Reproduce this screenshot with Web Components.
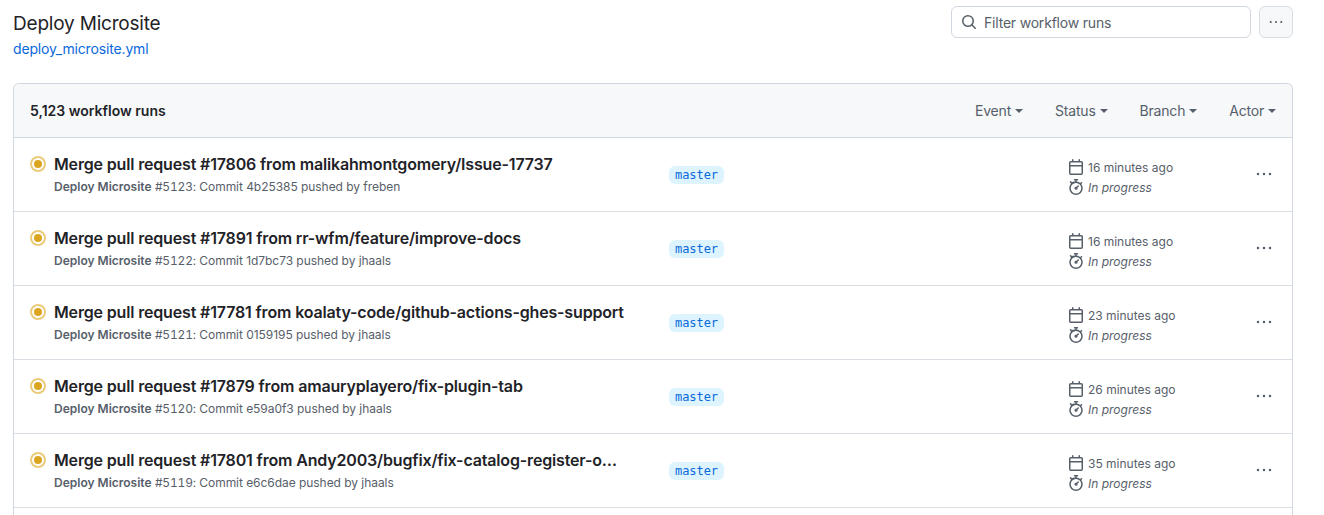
<!DOCTYPE html>
<html>
<head>
<meta charset="utf-8">
<title>Deploy Microsite</title>
<style>
    html, body { margin: 0; height: 515px; overflow: hidden; background: #fff; }
    body { font-family: Inter, "Liberation Sans", sans-serif; color: #1f2328; }
</style>
</head>
<body>
<runs-page>
    <run-row slot="rows" heading="Merge pull request #17806 from malikahmontgomery/Issue-17737" number="5123" commit="4b25385" actor="freben" age="16 minutes ago"></run-row>
    <run-row slot="rows" heading="Merge pull request #17891 from rr-wfm/feature/improve-docs" number="5122" commit="1d7bc73" actor="jhaals" age="16 minutes ago"></run-row>
    <run-row slot="rows" heading="Merge pull request #17781 from koalaty-code/github-actions-ghes-support" number="5121" commit="0159195" actor="jhaals" age="23 minutes ago"></run-row>
    <run-row slot="rows" heading="Merge pull request #17879 from amauryplayero/fix-plugin-tab" number="5120" commit="e59a0f3" actor="jhaals" age="26 minutes ago"></run-row>
    <run-row slot="rows" heading="Merge pull request #17801 from Andy2003/bugfix/fix-catalog-register-o…" number="5119" commit="e6c6dae" actor="jhaals" age="35 minutes ago"></run-row>
</runs-page>
<script>
const kebab = `<svg width="16" height="16" viewBox="0 0 16 16" fill="currentColor"><circle cx="2" cy="8" r="1.25"/><circle cx="8" cy="8" r="1.25"/><circle cx="14" cy="8" r="1.25"/></svg>`

const pageTemplate = document.createElement('template')
pageTemplate.innerHTML = `
<style>
    :host { display: block; padding: 0 31px 0 13px; }
    .top { display: flex; justify-content: space-between; height: 83px; }
    h1 { margin: 0; padding-top: 11px; font-size: 19px; line-height: 25px; font-weight: 400; letter-spacing: -0.2px; color: #1f2328; }
    a { display: block; margin-top: 3px; font-size: 14px; line-height: 20px; color: #0969da; letter-spacing: -0.15px; text-decoration: none; }
    .tools { display: flex; gap: 8px; padding: 6px 0 0; height: 32px; }
    .filter { display: flex; align-items: center; gap: 7px; box-sizing: border-box; width: 300px; height: 32px; padding: 0 9px; border: 1px solid #d0d7de; border-radius: 6px; font-size: 14px; letter-spacing: -0.2px; color: #57606a; }
    .filter svg { flex: none; }
    .more { display: flex; align-items: center; justify-content: center; box-sizing: border-box; width: 34px; height: 32px; border: 1px solid #d8dee4; border-radius: 6px; background: #f6f8fa; color: #57606a; }
    .more svg { width: 14px; height: 14px; }
    .box { border: 1px solid #d0d7de; border-bottom: 0; border-radius: 6px 6px 0 0; padding-bottom: 20px; }
    header { display: flex; align-items: center; justify-content: space-between; height: 53px; padding: 0 16px; background: #f6f8fa; border-bottom: 1px solid #d0d7de; border-radius: 6px 6px 0 0; }
    .count { font-size: 14px; font-weight: 600; line-height: 20px; color: #1f2328; }
    .filters { display: flex; gap: 32px; font-size: 14px; letter-spacing: -0.2px; color: #57606a; }
    .filters span { display: flex; align-items: center; gap: 4px; }
    .filters span::after { content: ""; border: 4px solid transparent; border-top-color: currentColor; border-bottom: 0; }
</style>
<div class="top">
    <div>
        <h1>Deploy Microsite</h1>
        <a href="#">deploy_microsite.yml</a>
    </div>
    <div class="tools">
        <div class="filter">
            <svg width="16" height="16" viewBox="0 0 16 16" fill="#57606a"><path d="M10.68 11.74a6 6 0 0 1-7.922-8.982 6 6 0 0 1 8.982 7.922l3.04 3.04a.749.749 0 0 1-.326 1.275.749.749 0 0 1-.734-.215ZM11.5 7a4.499 4.499 0 1 0-8.997 0A4.499 4.499 0 0 0 11.5 7Z"/></svg>
            Filter workflow runs
        </div>
        <div class="more">${kebab}</div>
    </div>
</div>
<div class="box">
    <header>
        <div class="count">5,123 workflow runs</div>
        <div class="filters"><span>Event</span><span>Status</span><span>Branch</span><span>Actor</span></div>
    </header>
    <slot name="rows"></slot>
</div>
`

customElements.define('runs-page',
class extends HTMLElement {
    constructor() {
        super()
        this.attachShadow({ mode: 'open' })
        .appendChild(pageTemplate.content.cloneNode(true))
    }
})

const rowTemplate = document.createElement('template')
rowTemplate.innerHTML = `
<style>
    :host { display: grid; grid-template-columns: 24px 615px 400px 1fr 16px; box-sizing: border-box; height: 74px; padding: 16px 20px 0 16px; border-bottom: 1px solid #d8dee4; }
    .status { padding-top: 2px; }
    .title { font-size: 16px; font-weight: 600; line-height: 20px; letter-spacing: -0.16px; color: #1f2328; white-space: nowrap; }
    .meta { margin-top: 4px; font-size: 12px; line-height: 18px; color: #57606a; white-space: nowrap; }
    .meta b { font-weight: 600; }
    .num { font-feature-settings: "tnum"; letter-spacing: -0.15px; }
    .rest { letter-spacing: -0.05px; }
    .branch { padding-top: 9px; }
    .branch span { display: inline-block; height: 18px; padding: 0 6px; border-radius: 6px; background: #ddf4ff; color: #0969da; font: 12px/18px "DejaVu Sans Mono", "Liberation Mono", monospace; letter-spacing: -0.05px; }
    .time { padding-top: 4px; font-size: 12px; line-height: 20px; color: #57606a; }
    .time div { display: flex; align-items: center; gap: 4px; }
    .time em { font-style: italic; }
    .time svg { flex: none; margin: -2px 0 0 -1px; }
    .menu { padding-top: 12px; color: #57606a; }
    .menu svg { display: block; width: 16px; height: 16px; }
</style>
<div class="status">
    <svg width="16" height="16" viewBox="0 0 16 16"><circle cx="8" cy="8" r="7" fill="none" stroke="#eccb7d" stroke-width="2"/><circle cx="8" cy="8" r="4" fill="#dba520"/></svg>
</div>
<div>
    <div class="title"></div>
    <div class="meta"><b>Deploy Microsite</b> <span class="num"></span> <span class="rest"></span></div>
</div>
<div class="branch"><span>master</span></div>
<div class="time">
    <div>
        <svg width="16" height="16" viewBox="0 0 16 16" fill="#57606a"><path d="M4.75 0a.75.75 0 0 1 .75.75V2h5V.75a.75.75 0 0 1 1.5 0V2h1.25c.966 0 1.75.784 1.75 1.75v10.5A1.75 1.75 0 0 1 13.25 16H2.75A1.75 1.75 0 0 1 1 14.25V3.75C1 2.784 1.784 2 2.75 2H4V.75A.75.75 0 0 1 4.75 0ZM2.5 7.5v6.75c0 .138.112.25.25.25h10.5a.25.25 0 0 0 .25-.25V7.5Zm10.75-4H2.75a.25.25 0 0 0-.25.25V6h11V3.75a.25.25 0 0 0-.25-.25Z"/></svg>
        <span class="age"></span>
    </div>
    <div>
        <svg width="16" height="16" viewBox="0 0 16 16" fill="#57606a"><path d="M5.75.75A.75.75 0 0 1 6.5 0h3a.75.75 0 0 1 0 1.5h-.75v1l-.001.041a6.724 6.724 0 0 1 3.464 1.435l.007-.006.75-.75a.749.749 0 0 1 1.275.326.749.749 0 0 1-.215.734l-.75.75-.006.007a6.75 6.75 0 1 1-10.548 0L2.72 4.03l-.75-.75a.751.751 0 0 1 .018-1.042.751.751 0 0 1 1.042-.018l.75.75.007.006A6.72 6.72 0 0 1 7.25 2.541V1.5H6.5a.75.75 0 0 1-.75-.75ZM8 14.5a5.25 5.25 0 1 0-.001-10.501A5.25 5.25 0 0 0 8 14.5Zm.389-6.7 1.33-1.33a.75.75 0 1 1 1.061 1.06L9.45 8.861A1.503 1.503 0 0 1 8 10.75a1.499 1.499 0 1 1 .389-2.95Z"/></svg>
        <em>In progress</em>
    </div>
</div>
<div class="menu">${kebab}</div>
`

customElements.define('run-row',
class extends HTMLElement {
    constructor() {
        super()
        this.attachShadow({ mode: 'open' })
        .appendChild(rowTemplate.content.cloneNode(true))
    }
    connectedCallback () {
        const root = this.shadowRoot
        root.querySelector('.title').textContent = this.getAttribute('heading')
        root.querySelector('.num').textContent = `#${this.getAttribute('number')}:`
        root.querySelector('.rest').textContent = `Commit ${this.getAttribute('commit')} pushed by ${this.getAttribute('actor')}`
        root.querySelector('.age').textContent = this.getAttribute('age')
    }
})
</script>
</body>
</html>
